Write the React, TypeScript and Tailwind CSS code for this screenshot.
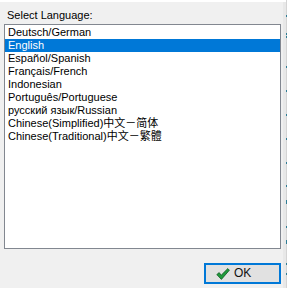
import React from "react";

const items = [
  "Deutsch/German",
  "English",
  "Español/Spanish",
  "Français/French",
  "Indonesian",
  "Português/Portuguese",
  "русский язык/Russian",
  "Chinese(Simplified)中文－简体",
  "Chinese(Traditional)中文－繁體",
];

const dots = [15, 33, 36, 66, 90, 114, 138, 162, 185, 200, 202, 226, 240, 242, 263, 273];

export default function App() {
  return (
    <div
      className="flex w-[287px] h-[288px] overflow-hidden bg-[#f0f0f0] text-[11px] leading-[13px] text-black"
      style={{ fontFamily: '"Liberation Sans", "Noto Sans CJK SC", "Noto Sans CJK TC", sans-serif' }}
    >
      <div className="flex flex-col w-[283px]">
        <div className="h-[2px] bg-white" />
        <div className="h-[22px] pl-[7px] pt-[7px]">Select Language:</div>
        <div className="ml-[4px] w-[277px] h-[225px] border border-[#828790] bg-white pt-[1px]">
          {items.map((t, i) => (
            <div
              key={t}
              className={
                i === 1
                  ? "h-[13px] pl-[3px] bg-[#0078d7] text-white whitespace-nowrap"
                  : "h-[13px] pl-[3px] whitespace-nowrap"
              }
            >
              {t}
            </div>
          ))}
        </div>
        <div className="flex justify-end mt-[14px] mr-[2px]">
          <div className="flex items-center w-[77px] h-[21px] border-2 border-[#0078d7] bg-[#e1e1e1] pl-[10px] gap-[4px]">
            <svg width="14" height="12" viewBox="0 0 14 12">
              <path
                d="M0.8 6.6 L3.2 4.6 L5.2 7.2 L11.8 0.6 L13.4 2.2 L5.4 11.4 Z"
                fill="#1f9a3c"
                stroke="#0f5a22"
                strokeWidth="0.8"
                strokeLinejoin="round"
              />
            </svg>
            <span className="text-[12px] leading-[13px] text-[#111]">OK</span>
          </div>
        </div>
      </div>
      <svg width="4" height="288" viewBox="0 0 4 288" className="shrink-0">
        <rect x="0" y="0" width="3" height="288" fill="#e8e8e8" />
        <rect x="0" y="0" width="3" height="2" fill="#ffffff" />
        <rect x="3" y="0" width="1" height="288" fill="#d4d4d4" />
        {dots.map((y) => (
          <rect key={y} x="3" y={y} width="1" height="2" fill="#2f7d95" />
        ))}
      </svg>
    </div>
  );
}
